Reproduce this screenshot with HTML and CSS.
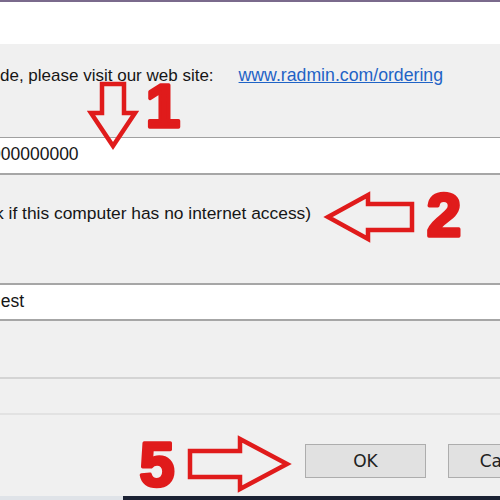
FILE: index.html
```html
<!DOCTYPE html>
<html>
<head>
<meta charset="utf-8">
<link rel="stylesheet" href="styles.css">
</head>
<body>
<div class="dialog">
  <div class="top"></div>
  <div class="panel p1">
    <div class="line">
      <span class="txt">de, please visit our web site:</span>
      <a class="link">www.radmin.com/ordering</a>
    </div>
  </div>
  <div class="field f1"><span class="val zeros">000000000</span></div>
  <div class="panel p2">
    <div class="line"><span class="txt chk">k if this computer has no internet access)</span></div>
  </div>
  <div class="field f2"><span class="val guest">uest</span></div>
  <div class="panel p3"></div>
  <div class="panel p4"></div>
  <div class="footer">
    <button class="btn ok">OK</button>
    <button class="btn cancel">Cancel</button>
  </div>
  <div class="taskbar"><div class="tb-dark"></div></div>
</div>
<svg class="overlay" width="500" height="500" viewBox="0 0 500 500">
  <g class="arrow">
    <polygon points="102,84 124,84 124,113 135,113 113,146 91,113 102,113"/>
    <polygon points="328,217 368,195 368,204 412,204 412,230 368,230 368,239"/>
    <polygon points="190,451 240,451 240,439 287,464 240,489 240,477 190,477"/>
  </g>
  <g class="num">
    <text x="163" y="127">1</text>
    <text x="444" y="236">2</text>
    <text x="157" y="486" class="n5">5</text>
  </g>
</svg>
</body>
</html>
```
FILE: styles.css
```css
html, body {
  margin: 0;
  padding: 0;
}
body {
  width: 500px;
  height: 500px;
  overflow: hidden;
  position: relative;
  background: #f0f0f0;
  font-family: "Liberation Sans", Arial, sans-serif;
  color: #161616;
}
.dialog {
  display: flex;
  flex-direction: column;
  width: 500px;
  height: 500px;
}
.top {
  height: 42px;
  background: #ffffff;
  border-top: 2px solid #7a6a8c;
}
.panel {
  background: #f0f0f0;
}
.p1 {
  border-bottom: 1px solid #a0a0a0;
  padding-top: 20px;
  box-sizing: border-box;
  height: 94px;
}
.line {
  display: flex;
  align-items: baseline;
  white-space: nowrap;
  line-height: 22px;
}
.txt {
  font-size: 17px;
}
.link {
  margin-left: 25px;
  font-size: 17.7px;
  color: #1f63c6;
  text-decoration: underline;
}
.field {
  background: #ffffff;
  display: flex;
  align-items: center;
  white-space: nowrap;
  box-sizing: border-box;
}
.f1 {
  height: 37px;
  border-bottom: 2px solid #a6a6a6;
  padding-bottom: 2px;
}
.val {
  font-size: 17.5px;
}
.zeros {
  margin-left: -9px;
}
.p2 {
  height: 108px;
  padding-top: 27px;
  box-sizing: border-box;
}
.chk {
  font-size: 17.4px;
  margin-left: -5px;
}
.f2 {
  height: 38px;
  border-top: 2px solid #a6a6a6;
  border-bottom: 2px solid #a6a6a6;
  padding-bottom: 2px;
}
.guest {
  margin-left: -9px;
}
.p3 {
  height: 58px;
  box-sizing: border-box;
  border-bottom: 2px solid #d4d4d4;
}
.p4 {
  height: 36px;
  box-sizing: border-box;
  border-bottom: 2px solid #e2e2e2;
}
.footer {
  flex: 1;
  display: flex;
  align-items: flex-start;
  padding-top: 29px;
  padding-left: 305px;
  gap: 22px;
  box-sizing: border-box;
  overflow: hidden;
}
.btn {
  flex: none;
  width: 121px;
  height: 34px;
  background: #e1e1e1;
  border: 1px solid #adadad;
  font-family: "DejaVu Sans", "Liberation Sans", sans-serif;
  font-size: 17px;
  color: #222222;
  padding: 0;
  margin: 0;
}
.taskbar {
  height: 4px;
  display: flex;
  justify-content: flex-end;
  background: #dfe3e8;
}
.tb-dark {
  width: 377px;
  background: #1b2233;
}
.overlay {
  position: absolute;
  top: 0;
  left: 0;
  pointer-events: none;
}
.arrow polygon {
  fill: none;
  stroke: #e01b1b;
  stroke-width: 4.5;
  stroke-linejoin: miter;
}
.num text {
  font-family: "Liberation Sans", Arial, sans-serif;
  font-weight: bold;
  font-size: 62px;
  fill: #e01b1b;
  stroke: #e01b1b;
  stroke-width: 3.5px;
  stroke-linejoin: round;
  text-anchor: middle;
}
.num .n5 {
  font-size: 63px;
}
```
